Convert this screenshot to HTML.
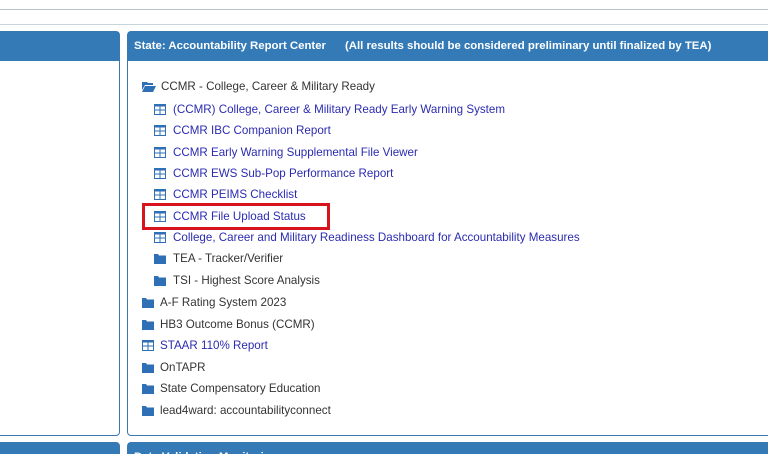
<!DOCTYPE html>
<html><head><style>
html,body{margin:0;width:768px;height:454px;overflow:hidden}
body{background:#fff;font-family:"Liberation Sans",Arial,sans-serif;font-size:11.6px;position:relative}
.ln{position:absolute;left:0;right:0;height:1px;background:#b8c4cc}
.pn{position:absolute;border:1px solid #3c78b0;border-radius:4px;background:#fff;box-sizing:border-box}
.hd{background:#337ab7;color:#fff;font-weight:bold;height:29px;line-height:29px;padding-left:6px;font-size:11.4px;white-space:pre}
.it{position:absolute;height:16px;line-height:16px;color:#333;white-space:nowrap}
.it.a{color:#2b2bb0}
.ic{position:absolute;top:2px;left:0}
</style></head><body>
<div class="ln" style="top:9px"></div>
<div class="ln" style="top:24px;background:#c8d4dc"></div>
<div class="pn" style="left:-4px;top:31px;width:124px;height:405px"><div class="hd"></div></div>
<div class="pn" style="left:127px;top:31px;width:645px;height:405px"><div class="hd">State: Accountability Report Center      (All results should be considered preliminary until finalized by TEA)</div></div>
<div class="pn" style="left:-4px;top:442px;width:124px;height:30px;background:#337ab7"></div>
<div class="pn" style="left:127px;top:442px;width:645px;height:30px;background:#337ab7"><div class="hd">Data Validation Monitoring</div></div>

<div class="it" style="left:142px;top:79px"><svg class="ic" width="14" height="12" viewBox="0 0 14 12"><path d="M0 1h5l1 1h5v2H3L0 9z" fill="#2f6fb5"/><path d="M3 5h11l-3 6H0z" fill="#2f6fb5"/></svg><span style="margin-left:19px">CCMR - College, Career &amp; Military Ready</span></div>

<div class="it a" style="left:154px;top:102px"><svg class="ic" width="12" height="11"><rect x=".5" y=".5" width="11" height="10" fill="none" stroke="#2f6fb5"/><rect x="0" y="0" width="12" height="2.5" fill="#2f6fb5"/><path d="M0 6h12M6 2v9" stroke="#2f6fb5"/></svg><span style="margin-left:19px">(CCMR) College, Career &amp; Military Ready Early Warning System</span></div>
<div class="it a" style="left:154px;top:123px"><svg class="ic" width="12" height="11"><rect x=".5" y=".5" width="11" height="10" fill="none" stroke="#2f6fb5"/><rect x="0" y="0" width="12" height="2.5" fill="#2f6fb5"/><path d="M0 6h12M6 2v9" stroke="#2f6fb5"/></svg><span style="margin-left:19px">CCMR IBC Companion Report</span></div>
<div class="it a" style="left:154px;top:145px"><svg class="ic" width="12" height="11"><rect x=".5" y=".5" width="11" height="10" fill="none" stroke="#2f6fb5"/><rect x="0" y="0" width="12" height="2.5" fill="#2f6fb5"/><path d="M0 6h12M6 2v9" stroke="#2f6fb5"/></svg><span style="margin-left:19px">CCMR Early Warning Supplemental File Viewer</span></div>
<div class="it a" style="left:154px;top:166px"><svg class="ic" width="12" height="11"><rect x=".5" y=".5" width="11" height="10" fill="none" stroke="#2f6fb5"/><rect x="0" y="0" width="12" height="2.5" fill="#2f6fb5"/><path d="M0 6h12M6 2v9" stroke="#2f6fb5"/></svg><span style="margin-left:19px">CCMR EWS Sub-Pop Performance Report</span></div>
<div class="it a" style="left:154px;top:187px"><svg class="ic" width="12" height="11"><rect x=".5" y=".5" width="11" height="10" fill="none" stroke="#2f6fb5"/><rect x="0" y="0" width="12" height="2.5" fill="#2f6fb5"/><path d="M0 6h12M6 2v9" stroke="#2f6fb5"/></svg><span style="margin-left:19px">CCMR PEIMS Checklist</span></div>
<div class="it a" style="left:154px;top:209px"><svg class="ic" width="12" height="11"><rect x=".5" y=".5" width="11" height="10" fill="none" stroke="#2f6fb5"/><rect x="0" y="0" width="12" height="2.5" fill="#2f6fb5"/><path d="M0 6h12M6 2v9" stroke="#2f6fb5"/></svg><span style="margin-left:19px">CCMR File Upload Status</span></div>
<div style="position:absolute;left:142px;top:203px;width:182px;height:21px;border:3px solid #d7141e;box-sizing:content-box"></div>
<div class="it a" style="left:154px;top:230px"><svg class="ic" width="12" height="11"><rect x=".5" y=".5" width="11" height="10" fill="none" stroke="#2f6fb5"/><rect x="0" y="0" width="12" height="2.5" fill="#2f6fb5"/><path d="M0 6h12M6 2v9" stroke="#2f6fb5"/></svg><span style="margin-left:19px">College, Career and Military Readiness Dashboard for Accountability Measures</span></div>
<div class="it" style="left:154px;top:251px"><svg class="ic" width="12" height="11"><path d="M0 1h4l1 1.5h7V11H0z" fill="#2f6fb5"/></svg><span style="margin-left:19px">TEA - Tracker/Verifier</span></div>
<div class="it" style="left:154px;top:273px"><svg class="ic" width="12" height="11"><path d="M0 1h4l1 1.5h7V11H0z" fill="#2f6fb5"/></svg><span style="margin-left:19px">TSI - Highest Score Analysis</span></div>
<div class="it" style="left:142px;top:295px"><svg class="ic" width="12" height="11"><path d="M0 1h4l1 1.5h7V11H0z" fill="#2f6fb5"/></svg><span style="margin-left:18px">A-F Rating System 2023</span></div>
<div class="it" style="left:142px;top:317px"><svg class="ic" width="12" height="11"><path d="M0 1h4l1 1.5h7V11H0z" fill="#2f6fb5"/></svg><span style="margin-left:18px">HB3 Outcome Bonus (CCMR)</span></div>
<div class="it a" style="left:142px;top:338px"><svg class="ic" width="12" height="11"><rect x=".5" y=".5" width="11" height="10" fill="none" stroke="#2f6fb5"/><rect x="0" y="0" width="12" height="2.5" fill="#2f6fb5"/><path d="M0 6h12M6 2v9" stroke="#2f6fb5"/></svg><span style="margin-left:18px">STAAR 110% Report</span></div>
<div class="it" style="left:142px;top:360px"><svg class="ic" width="12" height="11"><path d="M0 1h4l1 1.5h7V11H0z" fill="#2f6fb5"/></svg><span style="margin-left:18px">OnTAPR</span></div>
<div class="it" style="left:142px;top:381px"><svg class="ic" width="12" height="11"><path d="M0 1h4l1 1.5h7V11H0z" fill="#2f6fb5"/></svg><span style="margin-left:18px">State Compensatory Education</span></div>
<div class="it" style="left:142px;top:403px"><svg class="ic" width="12" height="11"><path d="M0 1h4l1 1.5h7V11H0z" fill="#2f6fb5"/></svg><span style="margin-left:18px">lead4ward: accountabilityconnect</span></div>
</body></html>
